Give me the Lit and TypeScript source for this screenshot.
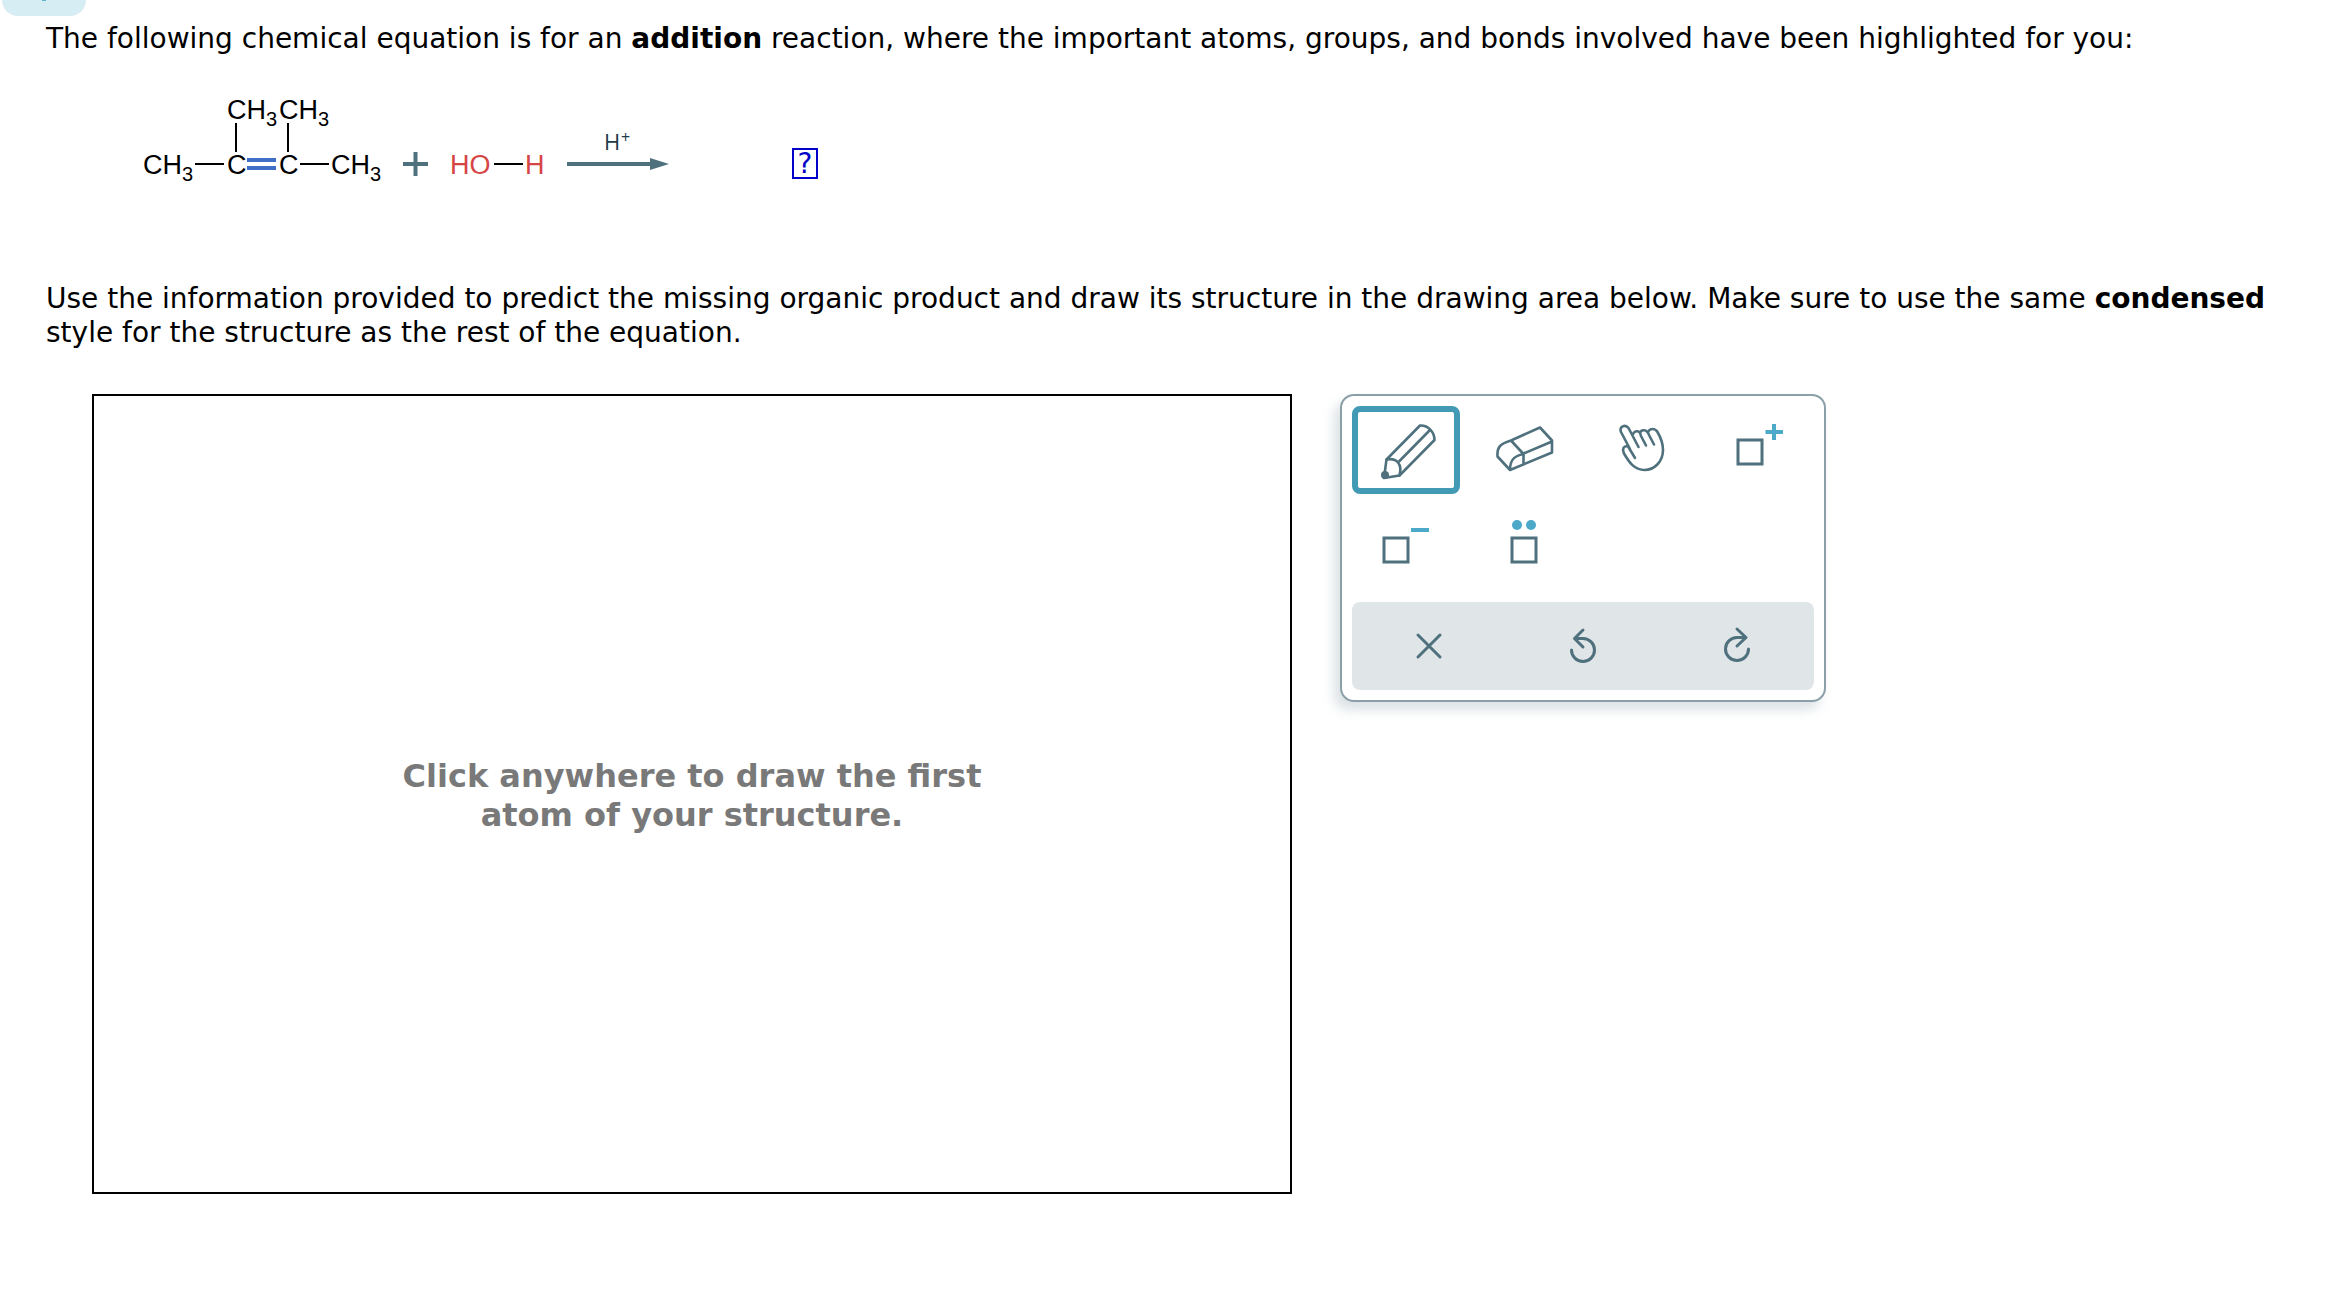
import { LitElement, html, css, svg } from "lit";
import { customElement, state } from "lit/decorators.js";

const icons: Record<string, unknown> = {
  pencil: svg`<g fill="none" stroke="#4f707d" stroke-width="2.600" stroke-linejoin="round" stroke-linecap="round">
      <path d="M5.500 35.500 39 1.500C47 1 53.500 8 53.500 16L18.500 51.500 3 54 5.500 35.500Z"/>
      <path d="M5.500 35.500C11 34.500 15 36 17 38.500 20 42 20 46 18.500 51.500M17 38.500 48.500 6.500"/></g>
      <circle cx="4" cy="51" r="4" fill="#4f707d"/>`,
  eraser: svg`<path fill="none" stroke="#4f707d" stroke-width="2.600" stroke-linejoin="round" d="M15 15.500 44 2.500 56 15.500V27.500L14 45 1.500 31.500C1 23 3 19 15 15.500L27.500 29V39M27.500 28.500 56 16.500M27.500 29C18 31 14 35 14 45"/>`,
  hand: svg`<path fill="none" stroke="#4f707d" stroke-width="2.600" stroke-linejoin="round" stroke-linecap="round" d="M19.500 23 9.500 4C6 -.5 0 3 2 8L11 25M14 10C16 6 21 6 22 12L27 21.500M21 9C22 5 28 5 30 11L35 20.500M29 8C31 4 36 4 38.500 8 42 14 44 19 44 26 44 38 35 46 25.500 46 15 46 10 38 5 29.500 2 23 8 20 10 24L16 34"/>`,
  plus: svg`<rect x="2" y="16" width="24" height="24" fill="none" stroke="#4f707d" stroke-width="3"/><path d="M29.500 8H47M38 0V16" stroke="#4ca9c9" stroke-width="4"/>`,
  minus: svg`<rect x="2" y="10" width="24" height="24" fill="none" stroke="#4f707d" stroke-width="3"/><path d="M29 2H47" stroke="#4ca9c9" stroke-width="4"/>`,
  pair: svg`<rect x="2" y="18" width="24" height="24" fill="none" stroke="#4f707d" stroke-width="3"/><circle cx="7" cy="5" r="5" fill="#4ca9c9"/><circle cx="21" cy="5" r="5" fill="#4ca9c9"/>`,
};

const tools = [
  { id: "pencil", label: "Draw", box: "-3 -4 56 60" },
  { id: "eraser", label: "Erase", box: "0 -5 56 60" },
  { id: "hand", label: "Move", box: "-5 -4 56 60" },
  { id: "plus", label: "Add positive charge", box: "-4 -4 56 60" },
  { id: "minus", label: "Add negative charge", box: "-4 -10 56 60" },
  { id: "pair", label: "Add lone pair", box: "-14 -2 56 60" },
];

@customElement("structure-palette")
export class StructurePalette extends LitElement {
  @state() private active = "pencil";

  static styles = css`
    :host { display: block; flex: none; }
    .palette {
      box-sizing: border-box; width: 486px; padding: 10px;
      border: 2px solid #8a9fa8; border-radius: 14px; background: #fff;
      box-shadow: -6px 8px 12px rgba(79, 112, 125, 0.2);
    }
    .tools { display: grid; grid-template-columns: repeat(4, 1fr); gap: 10px; }
    button { font: inherit; margin: 0; padding: 0; border: 0; background: none; cursor: pointer; }
    button svg { display: block; overflow: visible; }
    .tool {
      display: flex; align-items: center; justify-content: center;
      box-sizing: border-box; height: 88px;
      border: 6px solid transparent; border-radius: 8px;
    }
    .tool.active { border-color: #439ab4; }
    .actions {
      display: grid; grid-template-columns: repeat(3, 1fr);
      margin-top: 10px; border-radius: 8px; background: #e0e6e8;
    }
    .action { display: flex; align-items: center; justify-content: center; height: 88px; }
    .action svg { fill: none; stroke: #4f707d; stroke-width: 3; stroke-linecap: round; stroke-linejoin: round; }
  `;

  render() {
    return html`<div class="palette">
      <div class="tools">
        ${tools.map(
          (t) => html`<button
            class="tool ${this.active === t.id ? "active" : ""}"
            aria-label=${t.label}
            aria-pressed=${this.active === t.id}
            @click=${() => (this.active = t.id)}
          ><svg width="56" height="60" viewBox=${t.box}>${icons[t.id]}</svg></button>`
        )}
      </div>
      <div class="actions">
        <button class="action" aria-label="Clear"><svg width="24" height="24"><path d="M1 1 23 23M23 1 1 23"/></svg></button>
        <button class="action" aria-label="Undo"><svg width="26" height="34"><path d="M1.500 21A11.500 11.500 0 1 0 13 9.500H4.500M13 1 4.500 9.500 13 18"/></svg></button>
        <button class="action" aria-label="Redo"><svg width="26" height="36"><path d="M24.500 21A11.500 11.500 0 1 1 13 9.500H22M13 1 22 9.500 13 18"/></svg></button>
      </div>
    </div>`;
  }
}

@customElement("reaction-equation")
export class ReactionEquation extends LitElement {
  static styles = css`
    :host { display: block; }
    .equation { display: flex; align-items: flex-end; }
    svg { display: block; flex: none; overflow: visible; }
    text { font-family: "Liberation Sans", Arial, sans-serif; font-size: 27px; fill: #000; }
    .sub { font-size: 20px; }
    .red { fill: #d64545; }
    .bond { stroke: #000; stroke-width: 2; }
    .double { stroke: #3f6fc6; stroke-width: 4; }
    .operator { stroke: #4f707d; stroke-width: 4; margin-left: 18px; }
    .partner { margin-left: 22px; }
    .arrow { margin-left: 23px; }
    .condition { font-family: "Open Sans", sans-serif; font-size: 22px; fill: #1c3a47; }
    .charge { font-size: 16px; font-family: "Open Sans", sans-serif; fill: #1c3a47; }
    .missing {
      display: flex; align-items: center; justify-content: center; box-sizing: border-box;
      width: 26px; height: 31px; margin: 0 0 11px 123px; border: 2px solid #0000c8;
      color: #0000c8; font-family: "DejaVu Sans", Verdana, sans-serif; font-size: 28px; line-height: 27px;
    }
  `;

  private methyl(x: number, y: number) {
    return svg`<text x=${x} y=${y}>CH<tspan class="sub" dy="7">3</tspan></text>`;
  }

  render() {
    return html`<div class="equation">
      <svg width="242" height="96" role="img" aria-label="2,3-dimethyl-2-butene">
        ${this.methyl(84, 25)}${this.methyl(136, 25)}${this.methyl(0, 80)}${this.methyl(188, 80)}
        <text x="84" y="80">C</text><text x="136" y="80">C</text>
        <path class="bond" d="M52 70H81M157 70H186M93 29V58M145 29V58"/>
        <path class="double" d="M104 66H133M104 74H133"/>
      </svg>
      <svg class="operator" width="25" height="96" role="img" aria-label="plus"><path d="M0 70H25M12.500 58V82"/></svg>
      <svg class="partner" width="94" height="96" role="img" aria-label="water">
        <text class="red" x="0" y="80">HO</text><text class="red" x="75" y="80">H</text>
        <path class="bond" d="M44 70H73"/>
      </svg>
      <svg class="arrow" width="102" height="96" role="img" aria-label="acid catalyst">
        <text class="condition" x="37" y="56">H</text><text class="charge" x="54" y="49">+</text>
        <path d="M0 70H84" stroke="#4f707d" stroke-width="4"/><path d="M83 64 102 70 83 76Z" fill="#4f707d"/>
      </svg>
      <span class="missing">?</span>
    </div>`;
  }
}

@customElement("app-root")
export class AppRoot extends LitElement {
  static styles = css`
    :host { display: block; font-family: "DejaVu Sans", Verdana, sans-serif; font-size: 28px; line-height: 34px; color: #000; }
    .page { padding: 0 46px; }
    .tab { display: flex; justify-content: center; width: 84px; height: 16px; margin-left: 2px; border: 0; padding: 0; border-radius: 0 0 18px 18px; background: #d5edf3; }
    .tab svg { display: block; }
    p { margin: 0; }
    .intro { padding-top: 6px; }
    .equation { margin: 38px 0 0 97px; }
    .task { margin-top: 92px; }
    .workspace { display: flex; align-items: flex-start; gap: 48px; margin: 44px 0 0 46px; }
    .canvas {
      display: flex; align-items: center; justify-content: center; box-sizing: border-box;
      flex: 0 1 1200px; aspect-ratio: 3 / 2; border: 2px solid #000; padding: 4px 0 0; background: #fff;
      font: bold 32px/39px "DejaVu Sans", Verdana, sans-serif; color: #797979; text-align: center; cursor: crosshair;
    }
  `;

  render() {
    return html`
      <button class="tab" aria-label="Expand"><svg width="4" height="1"><rect width="4" height="1" fill="#5bb5cb"/></svg></button>
      <main class="page">
        <p class="intro">The following chemical equation is for an <b>addition</b> reaction, where the important atoms, groups, and bonds involved have been highlighted for you:</p>
        <reaction-equation class="equation"></reaction-equation>
        <p class="task">Use the information provided to predict the missing organic product and draw its structure in the drawing area below. Make sure to use the same <b>condensed</b> style for the structure as the rest of the equation.</p>
        <div class="workspace">
          <button class="canvas"><span>Click anywhere to draw the first<br>atom of your structure.</span></button>
          <structure-palette></structure-palette>
        </div>
      </main>`;
  }
}
